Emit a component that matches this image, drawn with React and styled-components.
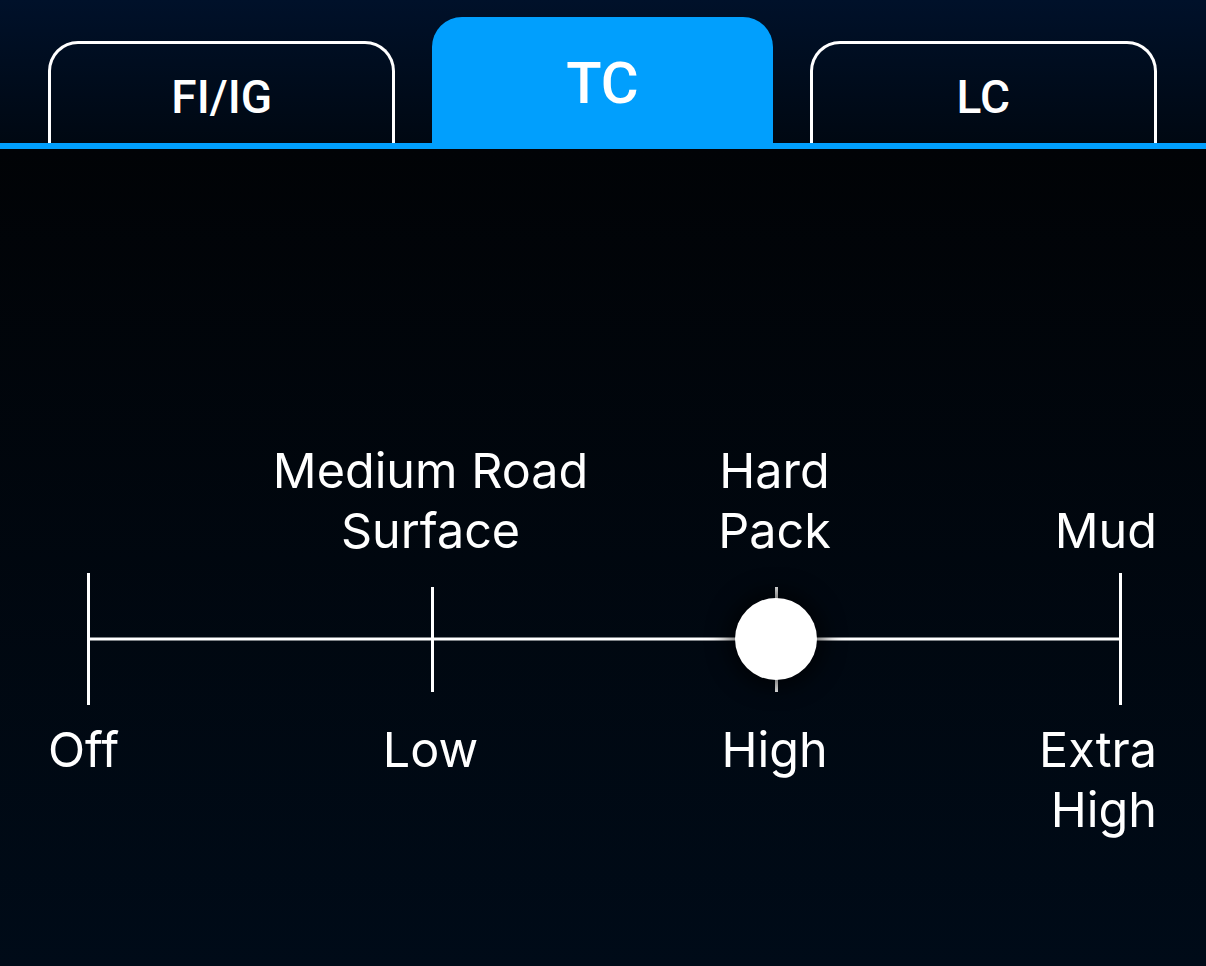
import React from "react";
import styled, { createGlobalStyle } from "styled-components";

const GlobalStyle = createGlobalStyle`
  html, body { margin: 0; padding: 0; background: #000b18; }
  * { box-sizing: border-box; }
`;

const Page = styled.div`
  width: 100%;
  min-height: 100vh;
  display: flex;
  flex-direction: column;
  font-family: "Inter", "Roboto", "Liberation Sans", sans-serif;
  color: #ffffff;
`;

const Header = styled.div`
  height: 149px;
  display: flex;
  align-items: flex-end;
  gap: 36.5px;
  padding: 0 49px 0 48px;
  background: linear-gradient(180deg, #00112a 0%, #000812 100%);
  border-bottom: 6px solid #019ffd;
`;

const Tab = styled.div`
  flex: 1;
  height: ${(p) => (p.$active ? "126px" : "102px")};
  display: flex;
  align-items: center;
  justify-content: center;
  padding-top: 6px;
  border-radius: 30px 30px 0 0;
  background: ${(p) => (p.$active ? "#019ffd" : "transparent")};
  border: ${(p) => (p.$active ? "none" : "3px solid #ffffff")};
  border-bottom: none;
  font-family: "Roboto", "Liberation Sans", sans-serif;
  font-weight: 500;
  font-size: ${(p) => (p.$active ? "58px" : "46px")};
  color: #ffffff;
`;

const Body = styled.div`
  flex: 1;
  display: flex;
  flex-direction: column;
  padding-top: 292px;
  background: linear-gradient(180deg, #010306 0%, #000b18 100%);
`;

const LabelRow = styled.div`
  display: flex;
  justify-content: space-between;
  align-items: ${(p) => (p.$top ? "flex-end" : "flex-start")};
  height: 120px;
  padding: 0 49px 0 48px;
`;

const Slot = styled.div`
  width: 77px;
  height: 100%;
  display: flex;
  align-items: ${(p) => (p.$top ? "flex-end" : "flex-start")};
  justify-content: ${(p) =>
    p.$align === "start" ? "flex-start" : p.$align === "end" ? "flex-end" : "center"};
`;

const Label = styled.div`
  white-space: nowrap;
  font-size: 48.5px;
  line-height: 60px;
  font-weight: 400;
  text-align: ${(p) =>
    p.$align === "start" ? "left" : p.$align === "end" ? "right" : "center"};
`;

const Track = styled.div`
  position: relative;
  height: 132px;
  margin: 12px 84.5px 15px 86.5px;
  display: flex;
  justify-content: space-between;
  align-items: center;

  &::before {
    content: "";
    position: absolute;
    left: 1.5px;
    right: 1.5px;
    top: 50%;
    height: 3px;
    transform: translateY(-50%);
    background: #ffffff;
  }
`;

const Tick = styled.div`
  width: 3px;
  height: ${(p) => (p.$major ? "132px" : "105px")};
  background: #ffffff;
`;

const Thumb = styled.div`
  position: absolute;
  top: 50%;
  width: 82px;
  height: 82px;
  border-radius: 50%;
  background: #ffffff;
  transform: translate(-50%, -50%);
  box-shadow: 0 0 20px 8px rgba(0, 0, 0, 0.6);
`;

const tabs = [
  { id: "fi", label: "FI/IG" },
  { id: "tc", label: "TC", active: true },
  { id: "lc", label: "LC" },
];

const stops = [
  { top: [], bottom: ["Off"], align: "start", major: true },
  { top: ["Medium Road", "Surface"], bottom: ["Low"], align: "center" },
  { top: ["Hard", "Pack"], bottom: ["High"], align: "center" },
  { top: ["Mud"], bottom: ["Extra", "High"], align: "end", major: true },
];

const selected = 2;

export default function App() {
  const pos = selected / (stops.length - 1);
  return (
    <Page>
      <GlobalStyle />
      <Header>
        {tabs.map((t) => (
          <Tab key={t.id} $active={t.active}>
            {t.label}
          </Tab>
        ))}
      </Header>
      <Body>
        <LabelRow $top>
          {stops.map((s, i) => (
            <Slot key={i} $top $align={s.align}>
              <Label $align={s.align}>
                {s.top.map((line, j) => (
                  <div key={j}>{line}</div>
                ))}
              </Label>
            </Slot>
          ))}
        </LabelRow>
        <Track>
          {stops.map((s, i) => (
            <Tick key={i} $major={s.major} />
          ))}
          <Thumb style={{ left: `calc((100% - 3px) * ${pos} + 1.5px)` }} />
        </Track>
        <LabelRow>
          {stops.map((s, i) => (
            <Slot key={i} $align={s.align}>
              <Label $align={s.align}>
                {s.bottom.map((line, j) => (
                  <div key={j}>{line}</div>
                ))}
              </Label>
            </Slot>
          ))}
        </LabelRow>
      </Body>
    </Page>
  );
}
